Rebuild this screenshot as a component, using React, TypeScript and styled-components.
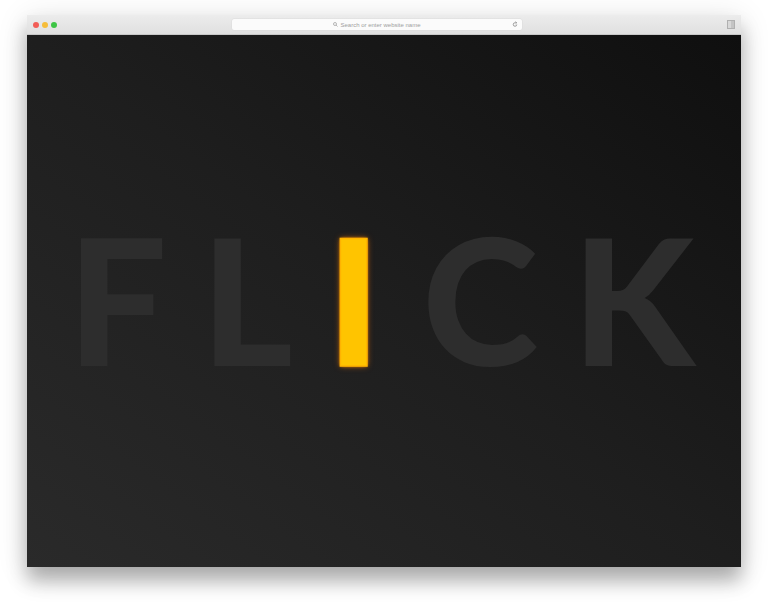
import styled, { createGlobalStyle } from "styled-components";

const GlobalStyle = createGlobalStyle`
  html, body {
    margin: 0;
    padding: 0;
    background: #ffffff;
    font-family: "Lato", "Liberation Sans", sans-serif;
  }
`;

// browser frame
const Page = styled.div`
  width: 768px;
  height: 605px;
  padding-top: 15px;
  box-sizing: border-box;
  overflow: hidden;
`;

const BrowserWindow = styled.div`
  width: 714px;
  height: 552px;
  margin: 0 auto;
  display: flex;
  flex-direction: column;
  box-shadow: 0 14px 18px rgba(0, 0, 0, 0.28), 0 4px 30px rgba(0, 0, 0, 0.12);
`;

const TitleBar = styled.div`
  height: 19px;
  display: flex;
  align-items: center;
  padding: 0 6px 0 6px;
  background: linear-gradient(#ececec, #e0e0e0);
  border-bottom: 1px solid #c8c8c8;
  position: relative;
`;

const Lights = styled.div`
  display: flex;
  gap: 3px;
`;

const Light = styled.span<{ $color: string }>`
  width: 6px;
  height: 6px;
  border-radius: 50%;
  background: ${(p) => p.$color};
`;

const AddressBar = styled.div`
  margin-left: 175px;
  width: 290px;
  height: 11px;
  background: #fbfbfb;
  border-radius: 2px;
  display: flex;
  align-items: center;
  justify-content: center;
  position: relative;
  box-shadow: 0 0 0 0.5px #dcdcdc;
`;

const AddressText = styled.span`
  font-family: "Liberation Sans", sans-serif;
  font-size: 6px;
  color: #a0a0a0;
  display: flex;
  align-items: center;
  gap: 2px;
`;

const Reload = styled.svg`
  position: absolute;
  right: 4px;
  top: 2px;
`;

const SideIcon = styled.div`
  margin-left: auto;
  width: 8px;
  height: 9px;
  border: 1px solid #b0b0b0;
  box-sizing: border-box;
  background: linear-gradient(90deg, #d8d8d8 50%, #c4c4c4 50%);
`;

const Content = styled.div`
  flex: 1;
  display: flex;
  align-items: center;
  justify-content: center;
  background: linear-gradient(to bottom left, #0f0f0f 0%, #1e1e1e 50%, #2a2a2a 100%);
  padding: 0 6px 6px 0;
`;

const Word = styled.div`
  display: flex;
  align-items: center;
  gap: 34px;
  font-family: "Lato", "Liberation Sans", sans-serif;
  font-weight: 900;
  font-size: 176px;
  line-height: 1;
  user-select: none;
`;

const Letter = styled.span<{ $lit?: boolean }>`
  color: ${(p) => (p.$lit ? "#ffc400" : "#2d2d2d")};
  margin-right: ${(p) => (p.$lit ? "8px" : "0")};
  -webkit-text-stroke: ${(p) => (p.$lit ? "1.5px #ffb300" : "0")};
  text-shadow: ${(p) =>
    p.$lit ? "0 0 3px #ff9800, 0 0 6px rgba(255, 120, 0, 0.7)" : "none"};
`;

const letters = ["F", "L", "I", "C", "K"];

export default function App() {
  return (
    <Page>
      <GlobalStyle />
      <BrowserWindow>
        <TitleBar>
          <Lights>
            <Light $color="#f25d57" />
            <Light $color="#f6bd3a" />
            <Light $color="#3ec546" />
          </Lights>
          <AddressBar>
            <AddressText>
              <svg width="5" height="5" viewBox="0 0 10 10">
                <circle cx="4" cy="4" r="3" fill="none" stroke="#999" strokeWidth="1.4" />
                <line x1="6.2" y1="6.2" x2="9" y2="9" stroke="#999" strokeWidth="1.4" />
              </svg>
              Search or enter website name
            </AddressText>
            <Reload width="6" height="7" viewBox="0 0 10 12">
              <path d="M8 6a3 3 0 1 1-3-3h2" fill="none" stroke="#888" strokeWidth="1.4" />
              <path d="M6 1l2 2-2 2" fill="none" stroke="#888" strokeWidth="1.4" />
            </Reload>
          </AddressBar>
          <SideIcon />
        </TitleBar>
        <Content>
          <Word>
            {letters.map((l) => (
              <Letter key={l} $lit={l === "I"}>
                {l}
              </Letter>
            ))}
          </Word>
        </Content>
      </BrowserWindow>
    </Page>
  );
}
